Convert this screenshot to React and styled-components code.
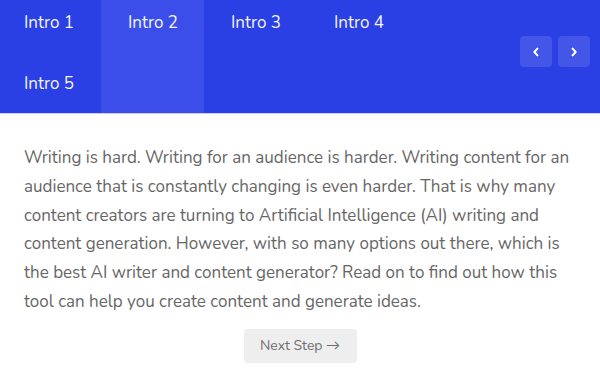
import React, { useState } from 'react'
import styled, { createGlobalStyle } from 'styled-components'

const GlobalStyle = createGlobalStyle`
    body {
        margin: 0;
        background: #ffffff;
        font-family: 'Nunito', 'Lato', sans-serif;
    }
`

const tabs = ['Intro 1', 'Intro 2', 'Intro 3', 'Intro 4', 'Intro 5']

const App = () => {
    const [active, setActive] = useState(1)
    return (
        <Wrapper>
            <GlobalStyle />
            <Header>
                <TabList>
                    {tabs.map((t, i) => (
                        <Tab
                            key={t}
                            $active={i === active}
                            onClick={() => setActive(i)}
                        >
                            {t}
                        </Tab>
                    ))}
                </TabList>
                <Nav>
                    <NavButton onClick={() => setActive((active + 4) % 5)}>
                        <Chevron viewBox="0 0 10 10">
                            <path d="M6.2 2.2 3.6 5l2.6 2.8" />
                        </Chevron>
                    </NavButton>
                    <NavButton onClick={() => setActive((active + 1) % 5)}>
                        <Chevron viewBox="0 0 10 10">
                            <path d="M3.8 2.2 6.4 5 3.8 7.8" />
                        </Chevron>
                    </NavButton>
                </Nav>
            </Header>
            <Content>
                <Text>
                    Writing is hard. Writing for an audience is harder.
                    Writing content for an audience that is constantly
                    changing is even harder. That is why many content
                    creators are turning to Artificial Intelligence (AI)
                    writing and content generation. However, with so many
                    options out there, which is the best AI writer and
                    content generator? Read on to find out how this tool can
                    help you create content and generate ideas.
                </Text>
                <Footer>
                    <NextButton>Next Step →</NextButton>
                </Footer>
            </Content>
        </Wrapper>
    )
}

const Wrapper = styled.div`
    width: 600px;
`

const Header = styled.div`
    display: flex;
    justify-content: space-between;
    background: #2a3fe4;
    height: 113px;
    border-bottom: 1px solid #c9cef8;
`

const TabList = styled.div`
    display: grid;
    grid-template-columns: 101px 103px 103px 103px;
    grid-template-rows: 61px 52px;
`

const Tab = styled.div`
    grid-row: ${(p) => (p.$active ? 'span 2' : 'auto')};
    padding: 13px 24px 0 27px;
    &:first-child,
    &:nth-child(5) {
        padding-left: 24px;
    }
    line-height: 20px;
    font-size: 17px;
    color: #f4f5ff;
    background: ${(p) => (p.$active ? '#3c4eea' : 'transparent')};
    cursor: pointer;
`

const Nav = styled.div`
    display: flex;
    gap: 6px;
    margin: 36px 10px 0 0;
`

const NavButton = styled.button`
    width: 32px;
    height: 31px;
    border: none;
    border-radius: 4px;
    background: rgba(255, 255, 255, 0.12);
    display: flex;
    align-items: center;
    justify-content: center;
    padding: 0;
    cursor: pointer;
`

const Chevron = styled.svg`
    width: 12px;
    height: 12px;
    fill: none;
    stroke: #ffffff;
    stroke-width: 1.7;
    stroke-linecap: round;
    stroke-linejoin: round;
`

const Content = styled.div`
    padding: 30px 24px 0;
`

const Text = styled.p`
    margin: 0;
    font-size: 17px;
    line-height: 28.8px;
    color: #666666;
`

const Footer = styled.div`
    display: flex;
    justify-content: center;
    margin-top: 12px;
`

const NextButton = styled.button`
    width: 113px;
    height: 34px;
    border: none;
    border-radius: 4px;
    background: #eeeeee;
    color: #6f6f6f;
    font-family: 'Nunito', 'Lato', sans-serif;
    font-size: 14px;
    cursor: pointer;
`

export default App
